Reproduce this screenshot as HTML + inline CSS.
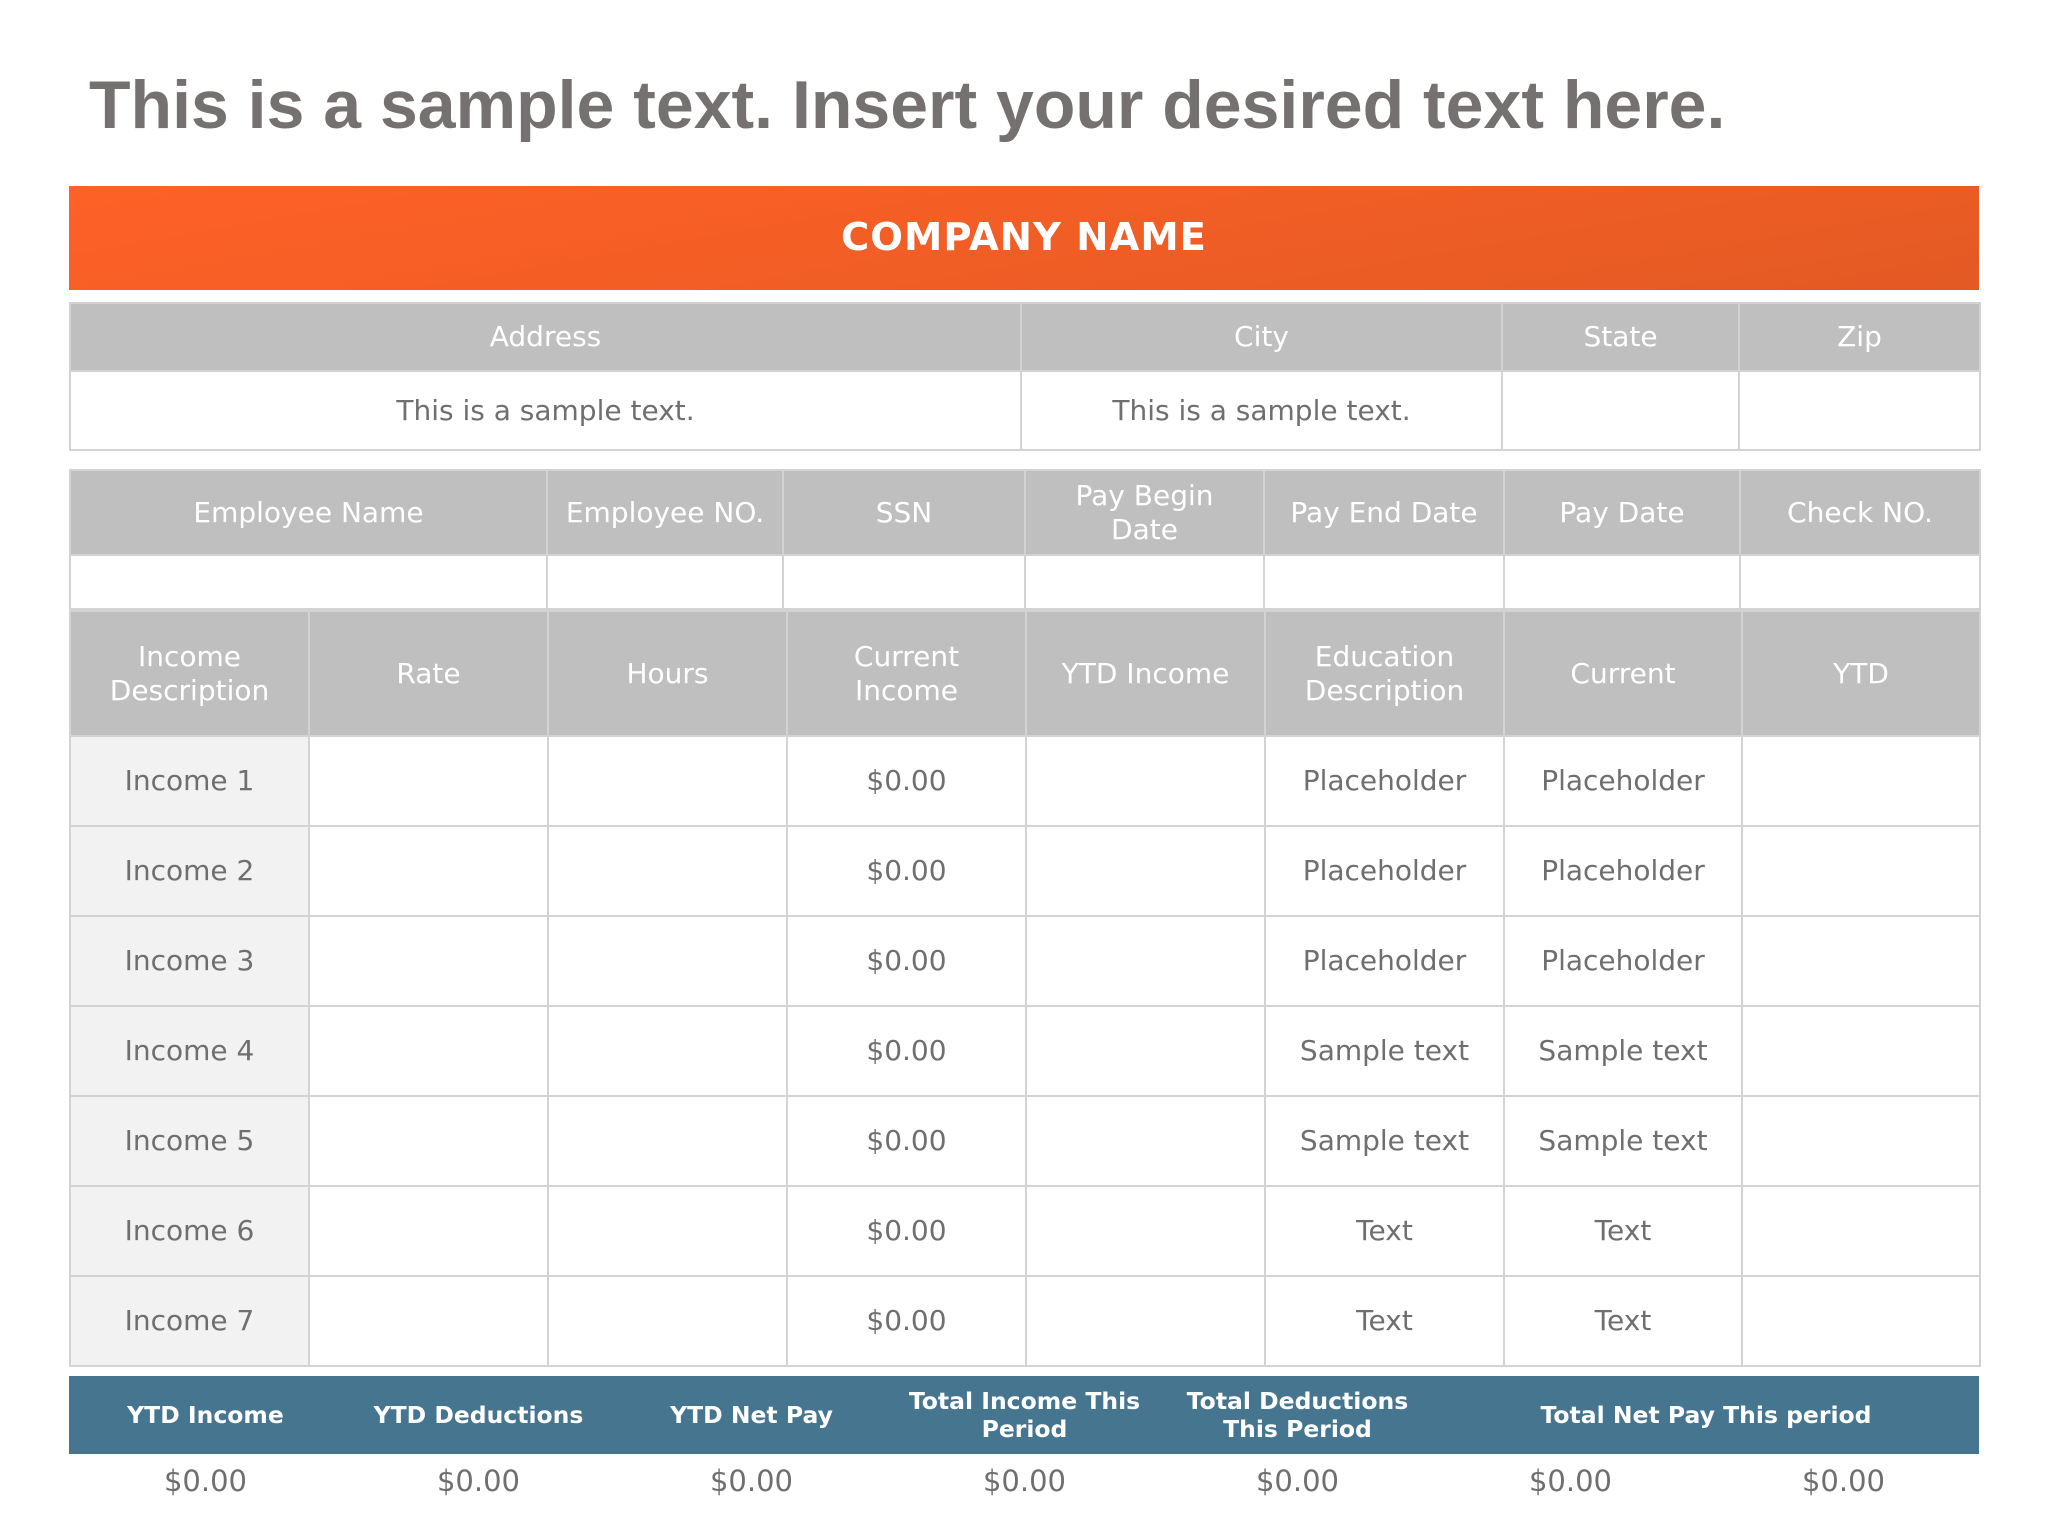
<!DOCTYPE html>
<html><head><meta charset="utf-8"><style>
*{margin:0;padding:0;box-sizing:border-box}
body{width:2048px;height:1536px;background:#fff;position:relative;overflow:hidden;font-family:"DejaVu Sans","Liberation Sans",sans-serif;}
.title{position:absolute;left:89px;top:66px;font-family:"Liberation Sans",sans-serif;font-weight:bold;font-size:68px;color:#767171;white-space:nowrap;letter-spacing:0px}
.bar{position:absolute;left:69px;top:186px;width:1910px;height:104px;background:linear-gradient(170deg,#ff6126,#e35a24);color:#fff;font-weight:bold;font-size:38.5px;text-align:center;line-height:104px;letter-spacing:1px}
table{position:absolute;left:69px;width:1910px;border-collapse:collapse;table-layout:fixed}
td{border:2px solid #d3d3d3;text-align:center;vertical-align:middle;font-size:28px;color:#6f6f6f;line-height:34px;padding:0}
tr.h td{background:#bfbfbf;color:#fff}
td.f{background:#f2f2f2}
.blue{position:absolute;left:69px;top:1376px;width:1910px;height:78px;background:#46758f}
.bl{position:absolute;top:1376px;height:78px;display:flex;align-items:center;justify-content:center;text-align:center;color:#fff;font-weight:bold;font-size:23.5px;line-height:28px;width:273px;white-space:nowrap}
.v{position:absolute;top:1464px;width:273px;text-align:center;font-size:29px;color:#6f6f6f}
</style></head><body>
<div class="title">This is a sample text. Insert your desired text here.</div>
<div class="bar">COMPANY NAME</div>
<table style="top:302px">
<colgroup><col style="width:951px"><col style="width:481px"><col style="width:237px"><col style="width:241px"></colgroup>
<tr class="h" style="height:68px"><td>Address</td><td>City</td><td>State</td><td>Zip</td></tr>
<tr style="height:79px"><td>This is a sample text.</td><td>This is a sample text.</td><td></td><td></td></tr>
</table>
<table style="top:469px">
<colgroup><col style="width:477px"><col style="width:236px"><col style="width:242px"><col style="width:239px"><col style="width:240px"><col style="width:236px"><col style="width:240px"></colgroup>
<tr class="h" style="height:85px"><td>Employee Name</td><td>Employee NO.</td><td>SSN</td><td>Pay Begin<br>Date</td><td>Pay End Date</td><td>Pay Date</td><td>Check NO.</td></tr>
<tr style="height:54px"><td></td><td></td><td></td><td></td><td></td><td></td><td></td></tr>
</table>
<table style="top:610px">
<colgroup><col style="width:239px"><col style="width:239px"><col style="width:239px"><col style="width:239px"><col style="width:239px"><col style="width:239px"><col style="width:238px"><col style="width:238px"></colgroup>
<tr class="h" style="height:125px"><td>Income<br>Description</td><td>Rate</td><td>Hours</td><td>Current<br>Income</td><td>YTD Income</td><td>Education<br>Description</td><td>Current</td><td>YTD</td></tr>
<tr style="height:90px"><td class="f">Income 1</td><td></td><td></td><td>$0.00</td><td></td><td>Placeholder</td><td>Placeholder</td><td></td></tr>
<tr style="height:90px"><td class="f">Income 2</td><td></td><td></td><td>$0.00</td><td></td><td>Placeholder</td><td>Placeholder</td><td></td></tr>
<tr style="height:90px"><td class="f">Income 3</td><td></td><td></td><td>$0.00</td><td></td><td>Placeholder</td><td>Placeholder</td><td></td></tr>
<tr style="height:90px"><td class="f">Income 4</td><td></td><td></td><td>$0.00</td><td></td><td>Sample text</td><td>Sample text</td><td></td></tr>
<tr style="height:90px"><td class="f">Income 5</td><td></td><td></td><td>$0.00</td><td></td><td>Sample text</td><td>Sample text</td><td></td></tr>
<tr style="height:90px"><td class="f">Income 6</td><td></td><td></td><td>$0.00</td><td></td><td>Text</td><td>Text</td><td></td></tr>
<tr style="height:90px"><td class="f">Income 7</td><td></td><td></td><td>$0.00</td><td></td><td>Text</td><td>Text</td><td></td></tr>
</table>
<div class="blue"></div>
<div class="bl" style="left:69px">YTD Income</div>
<div class="bl" style="left:342px">YTD Deductions</div>
<div class="bl" style="left:615px">YTD Net Pay</div>
<div class="bl" style="left:888px">Total Income This<br>Period</div>
<div class="bl" style="left:1161px">Total Deductions<br>This Period</div>
<div class="bl" style="left:1434px;width:544px">Total Net Pay This period</div>
<div class="v" style="left:69px">$0.00</div>
<div class="v" style="left:342px">$0.00</div>
<div class="v" style="left:615px">$0.00</div>
<div class="v" style="left:888px">$0.00</div>
<div class="v" style="left:1161px">$0.00</div>
<div class="v" style="left:1434px">$0.00</div>
<div class="v" style="left:1707px">$0.00</div>
</body></html>
